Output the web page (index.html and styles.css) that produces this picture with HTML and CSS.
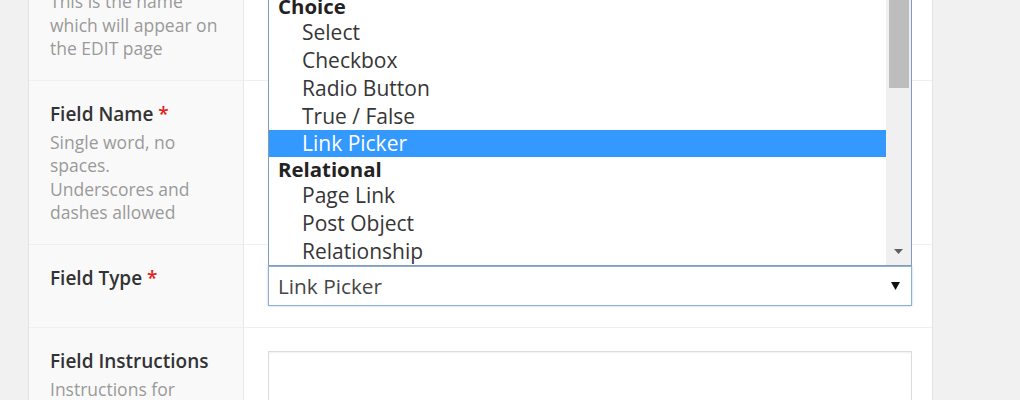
FILE: index.html
```html
<!DOCTYPE html>
<html lang="en">
<head>
<meta charset="utf-8">
<title>Field settings</title>
<link rel="stylesheet" href="styles.css">
</head>
<body>
<div class="panel">
  <div class="row row-first">
    <div class="label-cell">
      <div class="label">Field Label <span class="req">*</span></div>
      <div class="desc">This is the name which will appear on the EDIT page</div>
    </div>
    <div class="value-cell">
      <div class="input"></div>
    </div>
  </div>
  <div class="row">
    <div class="label-cell">
      <div class="label">Field Name <span class="req">*</span></div>
      <div class="desc">Single word, no spaces. Underscores and dashes allowed</div>
    </div>
    <div class="value-cell">
      <div class="input"></div>
    </div>
  </div>
  <div class="row row-type">
    <div class="label-cell">
      <div class="label">Field Type <span class="req">*</span></div>
    </div>
    <div class="value-cell value-select">
      <div class="select-wrap">
        <div class="listbox">
          <div class="options">
            <div class="group">Basic</div>
            <div class="option">Text</div>
            <div class="option">Text Area</div>
            <div class="option">Number</div>
            <div class="option">Email</div>
            <div class="option">Password</div>
            <div class="group">Content</div>
            <div class="option">Wysiwyg Editor</div>
            <div class="option">Image</div>
            <div class="option">File</div>
            <div class="group">Choice</div>
            <div class="option">Select</div>
            <div class="option">Checkbox</div>
            <div class="option">Radio Button</div>
            <div class="option">True / False</div>
            <div class="option selected">Link Picker</div>
            <div class="group">Relational</div>
            <div class="option">Page Link</div>
            <div class="option">Post Object</div>
            <div class="option">Relationship</div>
          </div>
          <div class="scrollbar">
            <div class="thumb"></div>
            <div class="track">
              <svg class="sb-arrow" width="9" height="5" viewBox="0 0 9 5"><path d="M0 0h9L4.5 5z" fill="#606060"/></svg>
            </div>
          </div>
        </div>
        <div class="select">
          <span class="select-text">Link Picker</span>
          <svg class="select-arrow" width="9" height="8" viewBox="0 0 9 8"><path d="M0 0h9L4.5 8z" fill="#111"/></svg>
        </div>
      </div>
    </div>
  </div>
  <div class="row">
    <div class="label-cell">
      <div class="label">Field Instructions</div>
      <div class="desc">Instructions for authors. Shown when submitting data</div>
    </div>
    <div class="value-cell value-textarea">
      <div class="textarea"></div>
    </div>
  </div>
</div>
</body>
</html>
```

FILE: styles.css
```css
html, body {
  margin: 0;
  padding: 0;
}
body {
  background: #f1f1f1;
  font-family: "Open Sans", "Liberation Sans", sans-serif;
  overflow: hidden;
  height: 400px;
}
.panel {
  margin-left: 28px;
  width: 905px;
  box-sizing: border-box;
  border-left: 1px solid #e3e3e3;
  border-right: 1px solid #e3e3e3;
  background: #fff;
  margin-top: -60px;
}
.row {
  display: grid;
  grid-template-columns: 215px 1fr;
  border-bottom: 1px solid #efefef;
}
.label-cell {
  background: #f9f9f9;
  border-right: 1px solid #e8e8e8;
  padding: 21px 25px 19px 21px;
}
.label {
  font-size: 19px;
  font-weight: 600;
  line-height: 24px;
  color: #333;
}
.req {
  color: #e2211c;
  font-weight: 600;
}
.desc {
  margin-top: 5px;
  font-size: 17.5px;
  line-height: 23.5px;
  color: #9a9a9a;
}
.value-cell {
  padding: 22px 20px 22px 24px;
}
.value-select {
  padding-top: 21px;
  padding-bottom: 21px;
}
.input {
  height: 40px;
  box-sizing: border-box;
  border: 1px solid #ddd;
  background: #fff;
}
.select-wrap {
  position: relative;
}
.select {
  height: 40px;
  box-sizing: border-box;
  border: 1px solid #8fb0d6;
  box-shadow: 0 0 2px rgba(80, 140, 210, 0.45);
  background: #fff;
  display: flex;
  align-items: center;
  justify-content: space-between;
  padding: 0 10px 0 9px;
}
.select-text {
  font-size: 20.8px;
  color: #454545;
}
.select-arrow {
  margin-right: 1px;
}
.listbox {
  position: absolute;
  left: 0;
  right: 0;
  bottom: 100%;
  border: 1px solid #7f9db9;
  background: #fff;
  display: flex;
  z-index: 2;
}
.options {
  flex: 1;
  font-size: 21px;
}
.group {
  height: 24px;
  line-height: 24px;
  padding-left: 9px;
  font-weight: 700;
  font-size: 20.4px;
  color: #222;
}
.option {
  height: 28px;
  line-height: 28px;
  padding-left: 33px;
  color: #363636;
}
.option.selected {
  background: #3399ff;
  color: #fff;
  height: 27px;
  line-height: 27px;
}
.scrollbar {
  width: 25px;
  background: #f0f0f0;
  display: flex;
  flex-direction: column;
}
.thumb {
  flex: 1;
  margin: 0 2px 0 3px;
  background: #bdbdbd;
}
.track {
  height: 177px;
  display: flex;
  align-items: flex-end;
  justify-content: center;
}
.sb-arrow {
  margin-bottom: 11px;
}
.value-textarea {
  padding-top: 23px;
}
.textarea {
  height: 110px;
  border: 1px solid #dcdcdc;
  box-shadow: inset 0 1px 2px rgba(0, 0, 0, 0.06);
  background: #fff;
}
```
